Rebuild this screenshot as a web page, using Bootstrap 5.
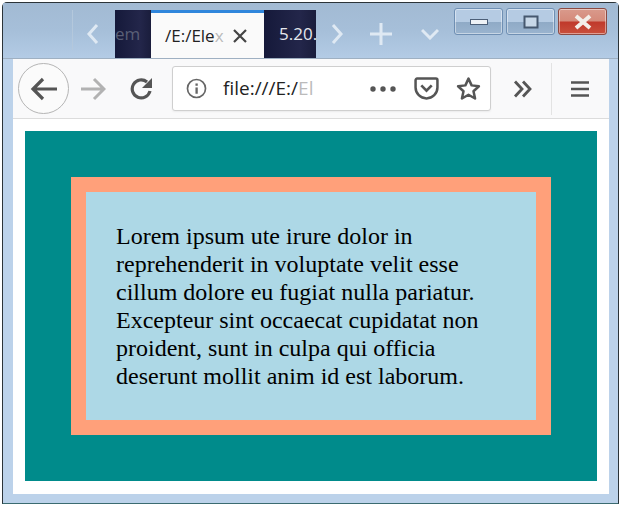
<!DOCTYPE html>
<html lang="en">
<head>
<meta charset="utf-8">
<title>Box model</title>
<link href="https://cdn.jsdelivr.net/npm/bootstrap@5.3.0/dist/css/bootstrap.min.css" rel="stylesheet">
<style>
html,body{margin:0;background:#fff;}
body{width:622px;height:509px;overflow:hidden;font-family:"Open Sans","Noto Sans",sans-serif;}
.win{margin:2px 0 0 2px;width:617px;height:502px;border:1px solid #2b3338;border-radius:5px 5px 0 0;background:#bcd2ea;padding:0 9px 9px 10px;border-bottom-color:#3b6b70;}
.tbar{height:56px;margin:0 -9px 0 -10px;padding-left:69px;background:linear-gradient(180deg,#a2bad3 0%,#a6bfd9 50%,#b3cbe5 100%);border-bottom:1px solid #9fb0c2;}
.sep{width:1px;height:40px;background:#b4c8dc;margin-top:7px;}
.chev{width:42px;height:48px;}
.chevb{padding-right:2px;}
.chevp{width:46px;}
.chevd{width:50px;padding-left:2px;}
.tabx{height:48px;background:linear-gradient(90deg,#15193a,#23264a 70%,#1a1d3c);color:#b9bcc8;font-size:17px;overflow:hidden;white-space:nowrap;}
.tab1{width:36px;color:#5a5f76;}
.tab2{width:113px;height:48px;background:#fafafa;border-top:3px solid #2f86dc;padding-left:14px;font-size:17px;color:#222;white-space:nowrap;}
.tab3{width:52px;padding-left:15px;color:#e6e8ee;}
.fadeg{color:#bbb;}
.ctrl{height:27px;border:1px solid #6f8fb3;border-radius:3px;background:linear-gradient(180deg,#b5cbe3 0%,#b5cbe3 50%,#8faac6 52%,#9ab4cf 100%);box-shadow:inset 0 0 0 1px rgba(255,255,255,.45);}
.cmin{width:49px;margin-right:3px;}
.cmax{width:49px;margin-right:3px;}
.ccls{width:49px;background:linear-gradient(180deg,#d99a8c 0%,#d58a7a 48%,#c0392b 52%,#c9503c 100%);border-color:#8c4a42;}
.ctrls{margin:5px 0 0 auto;padding-right:11px;}
.tool{height:60px;background:#f9f9fa;border-bottom:1px solid #dcdcdc;padding-left:5px;}
.backb{width:51px;height:51px;border:1px solid #b5b5b5;border-radius:50%;background:#fbfbfb;}
.fwd{margin-left:11px;}
.rel{margin-left:24px;}
.urlb{width:319px;height:45px;margin-left:18px;border:1px solid #cfcfcf;border-radius:3px;background:#fff;box-shadow:0 1px 2px rgba(0,0,0,.06);font-size:19px;color:#222;padding:0 9px 0 13px;}
.urltxt{margin-left:16px;}
.pock{margin-left:18px;}
.star{margin-left:17px;}
.dbl{margin-left:22px;}
.vsep{width:1px;height:52px;background:#e3e3e3;margin-left:18px;}
.burg{margin-left:19px;}
.pagearea{height:375px;background:#fff;padding:12px 12px 13px;}
.outerbx{height:350px;background:#008b8b;padding:46px;}
.midbx{height:258px;background:#ffa07a;padding:15px;}
.innerbx{height:228px;background:#add8e6;padding:30px;font-family:"Liberation Serif",serif;font-size:24px;line-height:28px;color:#000;}
.innerbx p{margin:0;}
</style>
</head>
<body>
<div class="win">
  <div class="tbar d-flex align-items-end">
    <div class="sep align-self-start flex-shrink-0"></div>
    <div class="chev chevb d-flex align-items-center justify-content-center flex-shrink-0">
      <svg width="14" height="22" viewBox="0 0 14 22"><path d="M11 2 3 11l8 9" fill="none" stroke="#dfe9f3" stroke-width="3"/></svg>
    </div>
    <div class="tabx tab1 d-flex align-items-center flex-shrink-0">em</div>
    <div class="tab2 d-flex align-items-center flex-shrink-0"><span>/E:/Ele<span class="fadeg">x</span></span>
      <svg class="ms-auto me-3" width="16" height="16" viewBox="0 0 16 16"><path d="M2 2l12 12M14 2 2 14" stroke="#444" stroke-width="2.2"/></svg>
    </div>
    <div class="tabx tab3 d-flex align-items-center flex-shrink-0">5.20.</div>
    <div class="chev d-flex align-items-center justify-content-center flex-shrink-0">
      <svg width="14" height="22" viewBox="0 0 14 22"><path d="M3 2l8 9-8 9" fill="none" stroke="#dfe9f3" stroke-width="3"/></svg>
    </div>
    <div class="chev chevp d-flex align-items-center justify-content-center flex-shrink-0">
      <svg width="22" height="22" viewBox="0 0 22 22"><path d="M11 0v22M0 11h22" stroke="#dfe9f3" stroke-width="3"/></svg>
    </div>
    <div class="chev chevd d-flex align-items-center justify-content-center flex-shrink-0">
      <svg width="18" height="12" viewBox="0 0 18 12"><path d="M1 2l8 8 8-8" fill="none" stroke="#dfe9f3" stroke-width="3"/></svg>
    </div>
    <div class="ctrls d-flex align-self-start">
      <div class="ctrl cmin d-flex align-items-center justify-content-center">
        <svg width="18" height="6"><rect x=".5" y=".5" width="17" height="5" fill="#eef2f6" stroke="#4c5f78"/></svg>
      </div>
      <div class="ctrl cmax d-flex align-items-center justify-content-center">
        <svg width="16" height="14"><rect x="1.5" y="1.5" width="13" height="11" fill="#c8d8e8" stroke="#46586f" stroke-width="2"/></svg>
      </div>
      <div class="ctrl ccls d-flex align-items-center justify-content-center">
        <svg width="20" height="16" viewBox="0 0 20 16"><path d="M3 2l14 12M17 2 3 14" stroke="#f3efe9" stroke-width="4"/></svg>
      </div>
    </div>
  </div>
  <div class="tool d-flex align-items-center">
    <div class="backb d-flex align-items-center justify-content-center">
      <svg width="28" height="24" viewBox="0 0 28 24"><path d="M13 2 3 12l10 10M3 12h24" fill="none" stroke="#555" stroke-width="3.2"/></svg>
    </div>
    <svg class="fwd" width="26" height="24" viewBox="0 0 26 24"><path d="M14 2l10 10-10 10M24 12H1" fill="none" stroke="#b2b2b2" stroke-width="3"/></svg>
    <svg class="rel" width="24" height="24" viewBox="0 0 24 24"><path d="M20 14a9 9 0 1 1-3-9" fill="none" stroke="#555" stroke-width="3.2"/><path d="M22 1v10H12z" fill="#555"/></svg>
    <div class="urlb d-flex align-items-center">
      <svg width="21" height="21" viewBox="0 0 20 20"><circle cx="10" cy="10" r="8.6" fill="none" stroke="#666" stroke-width="1.6"/><rect x="9" y="9" width="2.2" height="6" fill="#666"/><rect x="9" y="5.2" width="2.2" height="2.2" fill="#666"/></svg>
      <span class="urltxt">file:///E:/<span class="fadeg">El</span></span>
      <svg class="ms-auto" width="26" height="6"><circle cx="3" cy="3" r="2.7" fill="#555"/><circle cx="13" cy="3" r="2.7" fill="#555"/><circle cx="23" cy="3" r="2.7" fill="#555"/></svg>
      <svg class="pock" width="25" height="23" viewBox="0 0 24 22"><path d="M3 1.500h18A1.500 1.500 0 0 1 22.500 3v7a10.500 10.500 0 0 1-21 0V3A1.500 1.500 0 0 1 3 1.500z" fill="none" stroke="#555" stroke-width="2.400"/><path d="M7 8l5 5 5-5" fill="none" stroke="#555" stroke-width="2.600"/></svg>
      <svg class="star" width="25" height="25" viewBox="0 0 24 24"><path d="M12 2.500l3 6.500 7 .8-5.200 4.800 1.500 7-6.300-3.600-6.300 3.600 1.500-7L2 9.800 9 9z" fill="none" stroke="#555" stroke-width="2.400" stroke-linejoin="round"/></svg>
    </div>
    <svg class="dbl" width="20" height="18" viewBox="0 0 20 18"><path d="M2 1.500l7 7.500-7 7.500M10 1.500l7 7.500-7 7.500" fill="none" stroke="#555" stroke-width="2.800"/></svg>
    <div class="vsep"></div>
    <svg class="burg" width="18" height="18" viewBox="0 0 18 18"><path d="M0 2.500h18M0 9h18M0 15.500h18" stroke="#555" stroke-width="2.600"/></svg>
  </div>
  <div class="pagearea">
    <div class="outerbx">
      <div class="midbx">
        <div class="innerbx">
          <p>Lorem ipsum ute irure dolor in reprehenderit in voluptate velit esse cillum dolore eu fugiat nulla pariatur. Excepteur sint occaecat cupidatat non proident, sunt in culpa qui officia deserunt mollit anim id est laborum.</p>
        </div>
      </div>
    </div>
  </div>
</div>
<script src="https://cdn.jsdelivr.net/npm/bootstrap@5.3.0/dist/js/bootstrap.bundle.min.js"></script>
</body>
</html>
